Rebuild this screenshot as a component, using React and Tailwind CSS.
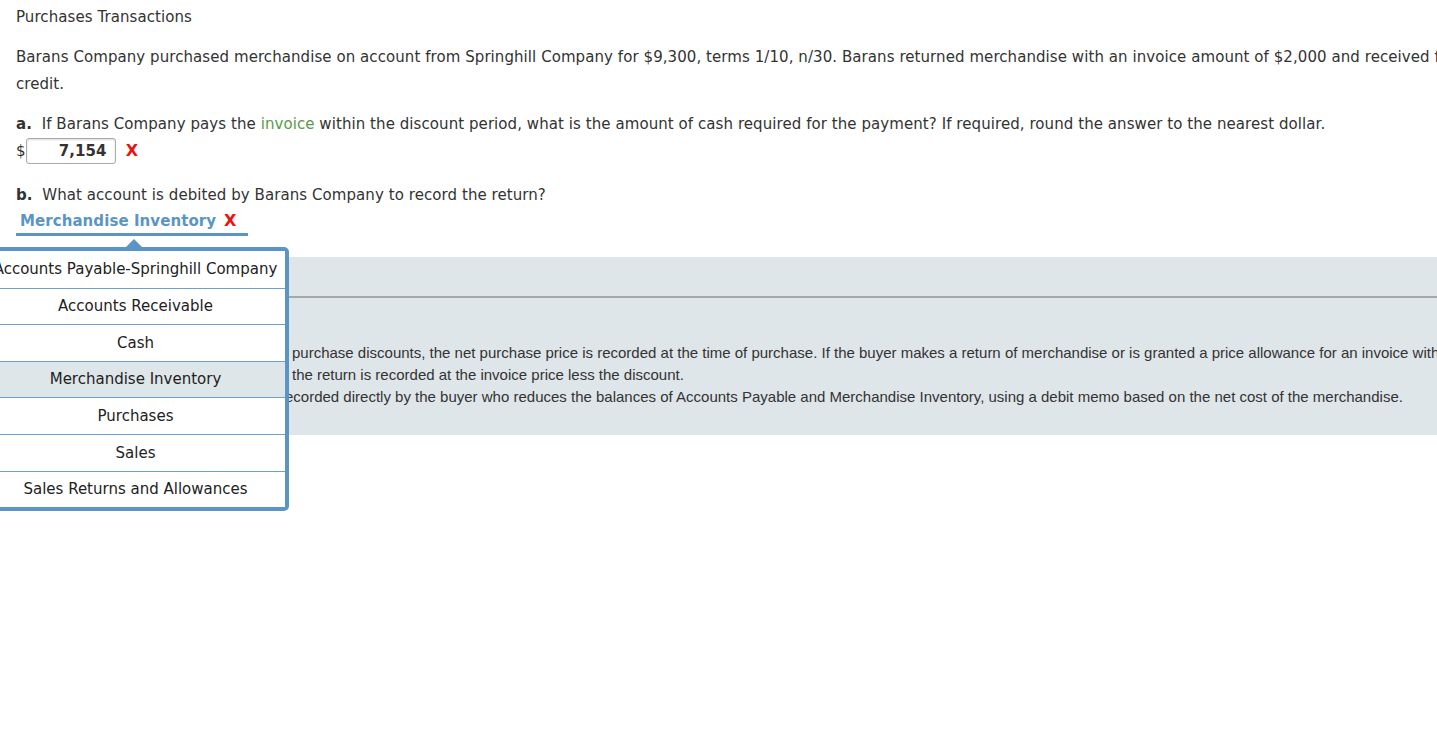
import React from "react";

const options = [
  "Accounts Payable-Springhill Company",
  "Accounts Receivable",
  "Cash",
  "Merchandise Inventory",
  "Purchases",
  "Sales",
  "Sales Returns and Allowances",
];

// explanation lines: first part sits under the open dropdown
const explain = [
  ["Under the net method of recording", "purchase discounts, the net purchase price is recorded at the time of purchase. If the buyer makes a return of merchandise or is granted a price allowance for an invoice within the discount period,", "w-[292px] pr-[6px]"],
  ["within the discount period,", "the return is recorded at the invoice price less the discount.", "w-[292px] pr-[6px]"],
  ["A purchase return is r", "ecorded directly by the buyer who reduces the balances of Accounts Payable and Merchandise Inventory, using a debit memo based on the net cost of the merchandise.", "w-[285px]"],
];

function RedX({ gap = "ml-[10px]" }) {
  return <span className={gap + " font-bold text-[#ee1111] text-[16px] tracking-normal"}>X</span>;
}

export default function App() {
  return (
    <div className="w-[1437px] h-[736px] overflow-hidden bg-white text-[#333] font-['Verdana','DejaVu_Sans',sans-serif] text-[15px]">
      <div className="w-[1480px] pl-4 pt-[7px] tracking-[0.07px]">
        <div className="leading-[20px]">Purchases Transactions</div>

        <p className="mt-[17px] leading-[27px] w-[1450px]">
          Barans Company purchased merchandise on account from Springhill Company for $9,300, terms 1/10, n/30. Barans returned merchandise with an invoice amount of $2,000 and received full credit.
        </p>

        {/* part a */}
        <div className="mt-[15px] leading-[22px]">
          <span className="font-bold">a.</span>&nbsp; If Barans Company pays the{" "}
          <span className="text-[#5a9a4a]">invoice</span> within the discount period, what is the amount of cash required for the payment? If required, round the answer to the nearest dollar.
        </div>
        <div className="mt-[3px] flex items-center">
          <span>$</span>
          <div className="w-[90px] h-[26px] border border-[#aaa] rounded-[3px] shadow-[inset_0_1px_2px_rgba(0,0,0,0.15)] flex items-center justify-end pr-[8px] font-bold">
            7,154
          </div>
          <RedX />
        </div>

        {/* part b */}
        <div className="mt-[20px] leading-[22px]">
          <span className="font-bold">b.</span>&nbsp; What account is debited by Barans Company to record the return?
        </div>
        <div className="relative w-[232px] mt-[4px]">
          <div className="border-b-[3px] border-[#5a95c6] pl-[4px] pb-[1px] leading-[22px] font-bold text-[#5a95c6]">
            Merchandise Inventory<RedX gap="ml-[8px]" />
          </div>

          {/* dropdown */}
          <div className="absolute z-10 left-[-34px] top-[29px] w-[307px] flex flex-col items-center tracking-normal">
            <svg width="16" height="8" viewBox="0 0 16 8" className="block -ml-[4px]">
              <path d="M0 8 L8 0 L16 8 Z" fill="#5a95c6" />
            </svg>
            <div className="w-full border-4 border-[#5a95c6] rounded-[5px] bg-white">
              {options.map((o, i) => (
                <div
                  key={o}
                  className={
                    "h-[36.6px] flex items-center justify-center whitespace-nowrap text-[#222] " +
                    (i > 0 ? "border-t border-[#6a9fd0] " : "") +
                    (o === "Merchandise Inventory" ? "bg-[#dfe6e9]" : "bg-white")
                  }
                >
                  {o}
                </div>
              ))}
            </div>
          </div>
        </div>
      </div>

      {/* explanation panel */}
      <div className="mt-[21px] w-[1480px] bg-[#dfe6e9] font-['Arial','Liberation_Sans',sans-serif] text-[15px] text-[#333]">
        <div className="h-[41px] border-b-2 border-[#a3a8ab]"></div>
        <div className="pt-[44px] pb-[27px] leading-[22px] whitespace-nowrap">
          {explain.map(([head, rest, w], i) => (
            <div key={i} className="flex">
              <span className={"shrink-0 text-right overflow-hidden " + w}>{head}</span>
              <span>{rest}</span>
            </div>
          ))}
        </div>
      </div>
    </div>
  );
}
